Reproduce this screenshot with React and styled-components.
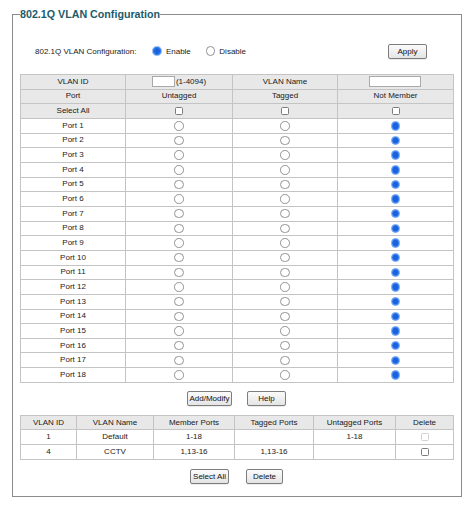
import React from 'react';
import styled, { createGlobalStyle } from 'styled-components';

const GlobalStyle = createGlobalStyle`
  html, body {
    margin: 0;
    padding: 0;
    background: #fff;
  }
  body {
    font-family: "Liberation Sans", Arial, sans-serif;
    font-size: 8px;
    color: #1a1a1a;
  }
`;

const Page = styled.div`
  width: 474px;
  height: 506px;
  padding: 8px 12px 0;
  box-sizing: border-box;
`;

const Frame = styled.fieldset`
  margin: 0;
  width: 450px;
  height: 489px;
  box-sizing: border-box;
  border: 1px solid #8c8c8c;
  padding: 0 8px 0 7px;
  min-width: 0;
`;

const Title = styled.legend`
  padding: 0;
  margin: 0;
  font-size: 10.7px;
  line-height: 12px;
  font-weight: bold;
  color: #1d5b6b;
`;

const TopRow = styled.div`
  display: flex;
  align-items: center;
  height: 16px;
  margin-top: 23px;
  padding-left: 15px;
  padding-right: 26px;
`;

const Choice = styled.span`
  display: inline-flex;
  align-items: center;
  gap: 4px;
  margin-left: ${p => p.$gap}px;
`;

const Radio = styled.span`
  display: inline-block;
  width: 9.5px;
  height: 9.5px;
  box-sizing: border-box;
  border-radius: 50%;
  vertical-align: middle;
  border: 1px solid ${p => (p.$on ? '#86b2f1' : '#929292')};
  background: ${p =>
    p.$on
      ? 'radial-gradient(circle, #1b62dc 0 2.7px, #2f7af0 2.8px)'
      : '#fff'};
`;

const Box = styled.span`
  display: inline-block;
  width: 8px;
  height: 8px;
  box-sizing: border-box;
  border: 1px solid ${p => (p.$off ? '#d2d2d2' : '#7c7c7c')};
  border-radius: 1.5px;
  background: #fff;
  vertical-align: middle;
`;

const Button = styled.button`
  margin: 0;
  width: ${p => p.$w}px;
  height: 15px;
  padding: 0;
  font-family: inherit;
  font-size: 8px;
  color: #111;
  border: 1px solid #7d7d7d;
  border-radius: 2px;
  background: linear-gradient(#fbfbfb, #e4e4e4);
  box-shadow: 0 0.5px 0.5px rgba(0, 0, 0, 0.15);
`;

const Spacer = styled.div`
  flex: 1;
`;

const Grid = styled.table`
  width: 100%;
  border-collapse: collapse;
  table-layout: fixed;
  margin-top: ${p => p.$top}px;
  border: 1px solid #bdbdbd;
`;

const Cell = styled.td`
  height: 13.67px;
  padding: 0;
  border: 1px solid #c4c4c4;
  text-align: center;
  vertical-align: middle;
  line-height: 1;
  white-space: nowrap;
  background: ${p => (p.$head ? '#e8e8e8' : '#fff')};
`;

const Field = styled.span`
  display: inline-block;
  width: ${p => p.$w}px;
  height: 11px;
  box-sizing: border-box;
  border: 1px solid #a9a9a9;
  background: #fff;
  vertical-align: middle;
  margin-right: 1px;
`;

const ButtonRow = styled.div`
  display: flex;
  justify-content: center;
  gap: ${p => p.$gap}px;
  margin-top: ${p => p.$top}px;
`;

const ports = Array.from({ length: 18 }, (_, i) => `Port ${i + 1}`);

const vlans = [
  { id: '1', name: 'Default', member: '1-18', tagged: '', untagged: '1-18', fixed: true },
  { id: '4', name: 'CCTV', member: '1,13-16', tagged: '1,13-16', untagged: '', fixed: false }
];

export default function App() {
  return (
    <Page>
      <GlobalStyle />
      <Frame>
        <Title>802.1Q VLAN Configuration</Title>
        <TopRow>
          <span>802.1Q VLAN Configuration:</span>
          <Choice $gap={16}>
            <Radio $on />
            Enable
          </Choice>
          <Choice $gap={15}>
            <Radio />
            Disable
          </Choice>
          <Spacer />
          <Button $w={39}>Apply</Button>
        </TopRow>

        <Grid $top={15}>
          <colgroup>
            <col style={{ width: 105 }} />
            <col style={{ width: 107 }} />
            <col style={{ width: 105 }} />
            <col style={{ width: 116 }} />
          </colgroup>
          <tbody>
            <tr>
              <Cell $head>VLAN ID</Cell>
              <Cell $head>
                <Field $w={23} />
                (1-4094)
              </Cell>
              <Cell $head>VLAN Name</Cell>
              <Cell $head>
                <Field $w={52} />
              </Cell>
            </tr>
            <tr>
              <Cell $head>Port</Cell>
              <Cell $head>Untagged</Cell>
              <Cell $head>Tagged</Cell>
              <Cell $head>Not Member</Cell>
            </tr>
            <tr>
              <Cell $head>Select All</Cell>
              <Cell $head><Box /></Cell>
              <Cell $head><Box /></Cell>
              <Cell $head><Box /></Cell>
            </tr>
            {ports.map(port => (
              <tr key={port}>
                <Cell>{port}</Cell>
                <Cell><Radio /></Cell>
                <Cell><Radio /></Cell>
                <Cell><Radio $on /></Cell>
              </tr>
            ))}
          </tbody>
        </Grid>

        <ButtonRow $gap={15} $top={8}>
          <Button $w={45}>Add/Modify</Button>
          <Button $w={39}>Help</Button>
        </ButtonRow>

        <Grid $top={9}>
          <colgroup>
            <col style={{ width: 56 }} />
            <col style={{ width: 77 }} />
            <col style={{ width: 81 }} />
            <col style={{ width: 79 }} />
            <col style={{ width: 82 }} />
            <col style={{ width: 58 }} />
          </colgroup>
          <tbody>
            <tr>
              <Cell $head>VLAN ID</Cell>
              <Cell $head>VLAN Name</Cell>
              <Cell $head>Member Ports</Cell>
              <Cell $head>Tagged Ports</Cell>
              <Cell $head>Untagged Ports</Cell>
              <Cell $head>Delete</Cell>
            </tr>
            {vlans.map(v => (
              <tr key={v.id}>
                <Cell>{v.id}</Cell>
                <Cell>{v.name}</Cell>
                <Cell>{v.member}</Cell>
                <Cell>{v.tagged}</Cell>
                <Cell>{v.untagged}</Cell>
                <Cell><Box $off={v.fixed} /></Cell>
              </tr>
            ))}
          </tbody>
        </Grid>

        <ButtonRow $gap={17} $top={9}>
          <Button $w={39}>Select All</Button>
          <Button $w={37}>Delete</Button>
        </ButtonRow>
      </Frame>
    </Page>
  );
}
